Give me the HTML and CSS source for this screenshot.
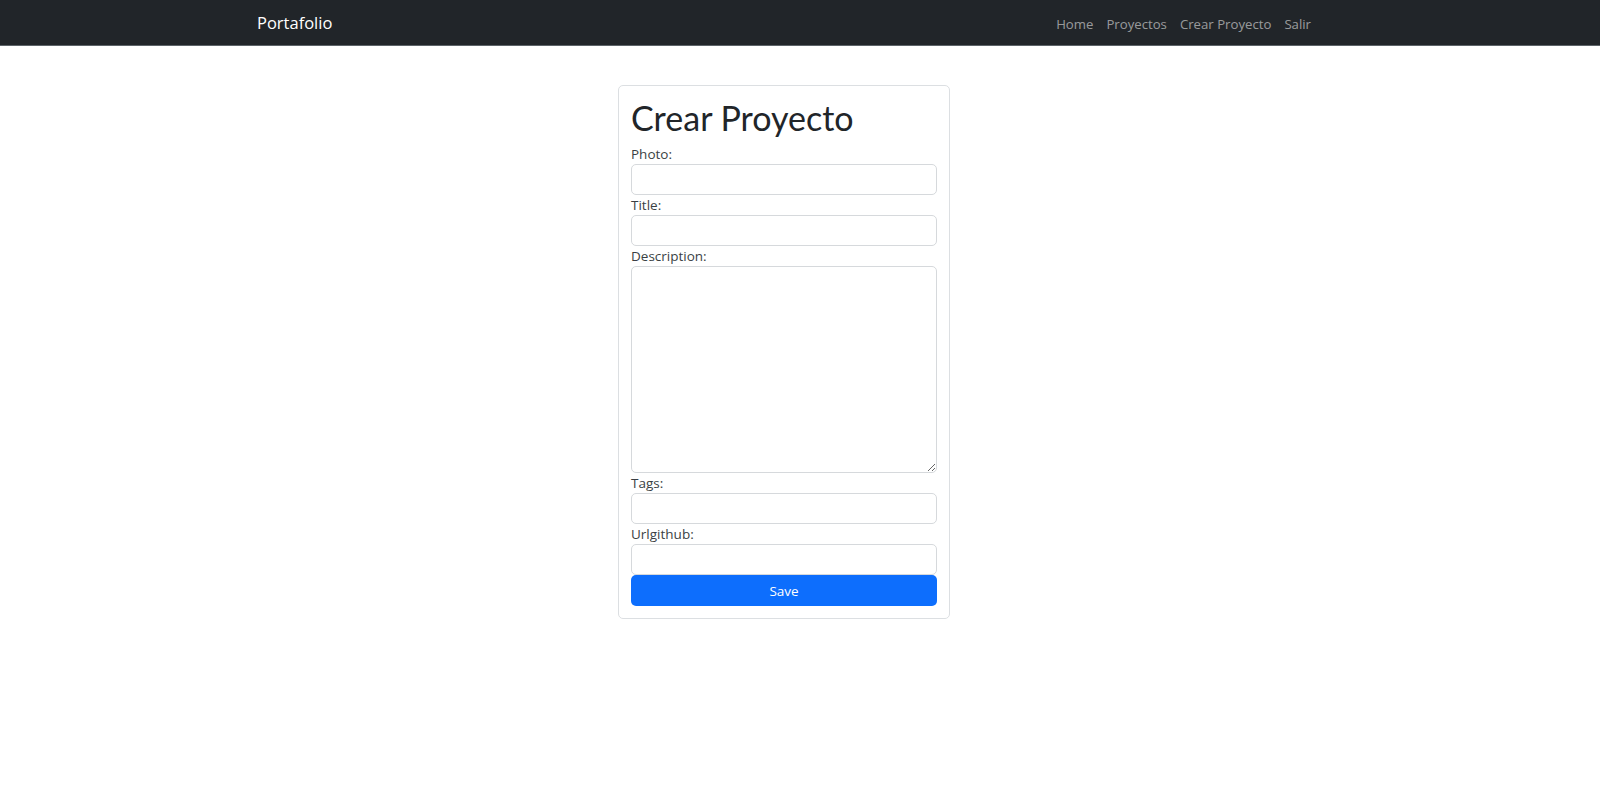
FILE: index.html
```html
<!DOCTYPE html>
<html lang="es">
<head>
  <meta charset="UTF-8">
  <title>Crear Proyecto</title>
  <link rel="stylesheet" href="styles.css">
</head>
<body>
<nav class="navbar">
  <div class="nav-inner">
    <a class="brand" href="#">Portafolio</a>
    <ul class="nav-links">
      <li><a href="#">Home</a></li>
      <li><a href="#">Proyectos</a></li>
      <li><a href="#">Crear Proyecto</a></li>
      <li><a href="#">Salir</a></li>
    </ul>
  </div>
</nav>

<main class="page">
  <form class="card">
    <h1>Crear Proyecto</h1>
    <label for="photo">Photo:</label>
    <input type="text" id="photo">
    <label for="title">Title:</label>
    <input type="text" id="title">
    <label for="description">Description:</label>
    <textarea id="description"></textarea>
    <label for="tags">Tags:</label>
    <input type="text" id="tags">
    <label for="urlgithub">Urlgithub:</label>
    <input type="text" id="urlgithub">
    <button type="submit" class="btn-save">Save</button>
  </form>
</main>
</body>
</html>
```

FILE: styles.css
```css
body {
  margin: 0;
  font-family: 'Open Sans', 'Liberation Sans', sans-serif;
  color: #212529;
  background-color: #fff;
}

.navbar {
  background-color: #212529;
  border-bottom: 1px solid #5c6368;
  height: 45px;
  padding-right: 32px;
}

.nav-inner {
  width: 1054px;
  height: 100%;
  margin: 0 auto;
  display: flex;
  align-items: center;
  justify-content: space-between;
}

.brand {
  color: #fff;
  text-decoration: none;
  font-size: 16.5px;
}

.nav-links {
  list-style: none;
  display: flex;
  gap: 13px;
  margin: 0;
  padding: 0;
}

.nav-links a {
  color: rgba(255, 255, 255, 0.55);
  text-decoration: none;
  font-size: 13.2px;
}

.page {
  padding-right: 32px;
  padding-top: 39px;
  display: flex;
  justify-content: center;
}

.card {
  width: 306px;
  padding: 12px;
  border: 1px solid #dcdfe2;
  border-radius: 5px;
  display: flex;
  flex-direction: column;
}

h1 {
  font-family: Lato, 'Open Sans', sans-serif;
  font-weight: 400;
  font-size: 34px;
  line-height: 40px;
  margin: 0 0 6px 0;
  color: #212529;
}

label {
  font-size: 13.5px;
  line-height: 20px;
  color: #3a3f44;
}

input[type="text"],
textarea {
  box-sizing: border-box;
  width: 100%;
  height: 31px;
  margin: 0;
  border: 1px solid #d6d9dc;
  border-radius: 5px;
  font-family: inherit;
}

textarea {
  height: 207px;
  resize: vertical;
}

.btn-save {
  height: 31px;
  border: none;
  border-radius: 5px;
  background-color: #0d6efd;
  color: #fff;
  font-family: inherit;
  font-size: 13.5px;
  cursor: pointer;
}
```
